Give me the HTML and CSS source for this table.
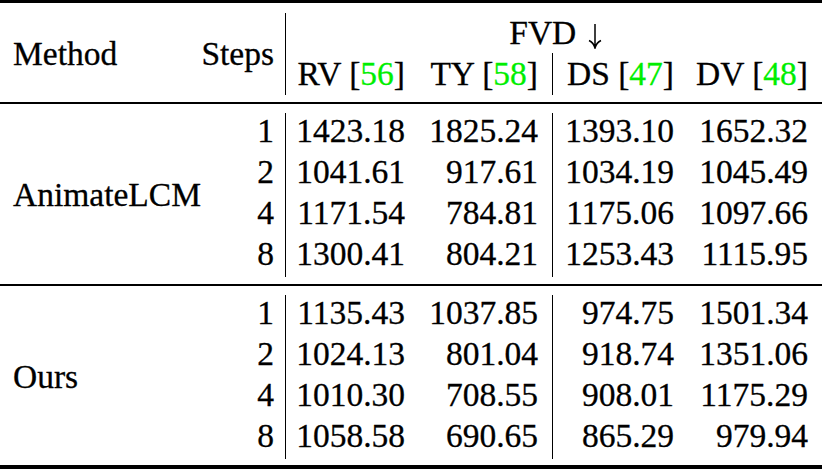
FILE: index.html
```html
<!DOCTYPE html>
<html lang="en">
<head>
<meta charset="utf-8">
<title>FVD comparison</title>
<link rel="stylesheet" href="styles.css">
</head>
<body>
<table class="results">
  <colgroup>
    <col class="c-method">
    <col class="c-steps">
    <col class="c-rv">
    <col class="c-ty">
    <col class="c-ds">
    <col class="c-dv">
  </colgroup>
  <tbody>
    <tr class="rule rule-top"><td colspan="6"><div class="line"></div></td></tr>
    <tr class="head1">
      <th class="method multi" rowspan="2">Method</th>
      <th class="steps multi" rowspan="2">Steps</th>
      <th class="fvd vl" colspan="4">FVD <svg class="arrow" width="16" height="26" viewBox="0 0 16 26" aria-label="down"><path d="M8 1 V24.5 M2 17.5 Q6.5 19.5 8 25 Q9.5 19.5 14 17.5" fill="none" stroke="#000" stroke-width="1.5"/></svg></th>
    </tr>
    <tr class="head2">
      <th class="num vl">RV [<span class="cite">56</span>]</th>
      <th class="num">TY [<span class="cite">58</span>]</th>
      <th class="num vl">DS [<span class="cite">47</span>]</th>
      <th class="num">DV [<span class="cite">48</span>]</th>
    </tr>
    <tr class="rule rule-mid"><td colspan="6"><div class="line"></div></td></tr>
    <tr>
      <td class="method multi" rowspan="4">AnimateLCM</td>
      <td class="steps">1</td>
      <td class="num vl">1423.18</td><td class="num">1825.24</td><td class="num vl">1393.10</td><td class="num">1652.32</td>
    </tr>
    <tr>
      <td class="steps">2</td>
      <td class="num vl">1041.61</td><td class="num">917.61</td><td class="num vl">1034.19</td><td class="num">1045.49</td>
    </tr>
    <tr>
      <td class="steps">4</td>
      <td class="num vl">1171.54</td><td class="num">784.81</td><td class="num vl">1175.06</td><td class="num">1097.66</td>
    </tr>
    <tr>
      <td class="steps">8</td>
      <td class="num vl">1300.41</td><td class="num">804.21</td><td class="num vl">1253.43</td><td class="num">1115.95</td>
    </tr>
    <tr class="rule rule-mid"><td colspan="6"><div class="line"></div></td></tr>
    <tr>
      <td class="method multi" rowspan="4">Ours</td>
      <td class="steps">1</td>
      <td class="num vl">1135.43</td><td class="num">1037.85</td><td class="num vl">974.75</td><td class="num">1501.34</td>
    </tr>
    <tr>
      <td class="steps">2</td>
      <td class="num vl">1024.13</td><td class="num">801.04</td><td class="num vl">918.74</td><td class="num">1351.06</td>
    </tr>
    <tr>
      <td class="steps">4</td>
      <td class="num vl">1010.30</td><td class="num">708.55</td><td class="num vl">908.01</td><td class="num">1175.29</td>
    </tr>
    <tr>
      <td class="steps">8</td>
      <td class="num vl">1058.58</td><td class="num">690.65</td><td class="num vl">865.29</td><td class="num">979.94</td>
    </tr>
    <tr class="rule rule-bottom"><td colspan="6"><div class="line"></div></td></tr>
  </tbody>
</table>
</body>
</html>
```
FILE: styles.css
```css
html, body {
  margin: 0;
  padding: 0;
  background: #ffffff;
}

body {
  font-family: "Liberation Serif", "Times New Roman", serif;
  font-size: 33.5px;
  color: #000000;
  -webkit-text-stroke: 0.3px;
}

.results {
  border-collapse: separate;
  border-spacing: 0;
  table-layout: fixed;
  width: 822px;
}

.c-method { width: 200px; }
.c-steps  { width: 85px; }
.c-rv     { width: 134px; }
.c-ty     { width: 133px; }
.c-ds     { width: 136px; }
.c-dv     { width: 134px; }

.results th,
.results td {
  font-weight: normal;
  height: 41px;
  box-sizing: border-box;
  line-height: 35px;
  padding: 0 14px 6px 0;
  vertical-align: top;
  white-space: nowrap;
  text-align: right;
}

.results .head1 th { height: 40px; padding-top: 2px; padding-bottom: 3px; }
.results .head2 th { height: 42px; padding-top: 3px; padding-bottom: 4px; }

.results .method {
  text-align: left;
  padding-left: 13px;
  padding-right: 0;
  overflow: visible;
}

.results .steps {
  padding-right: 11px;
}

.results .multi {
  vertical-align: middle;
}

.results .head1 .multi {
  padding-top: 4px;
  padding-bottom: 6px;
}

.results td.multi {
  padding-top: 5px;
  padding-bottom: 6px;
}

.results .fvd {
  text-align: center;
  padding-right: 0;
  padding-left: 4px;
}

.arrow {
  vertical-align: -5px;
  margin-left: 2px;
}

.results .vl {
  border-left: 1px solid #000000;
}

.cite {
  color: #00ee00;
}

/* booktabs-style rules */
.results .rule td {
  height: auto;
  padding: 0;
  line-height: 0;
  font-size: 0;
}

.results .rule .line {
  background: #000000;
  width: 100%;
}

.results .rule-top td { padding-bottom: 10px; }
.results .rule-top .line { height: 3px; }

.results .rule-mid td { padding: 7px 0 9px; }
.results .rule-mid .line { height: 2px; }

.results .rule-bottom td { padding-top: 6px; }
.results .rule-bottom .line { height: 4px; }
```
